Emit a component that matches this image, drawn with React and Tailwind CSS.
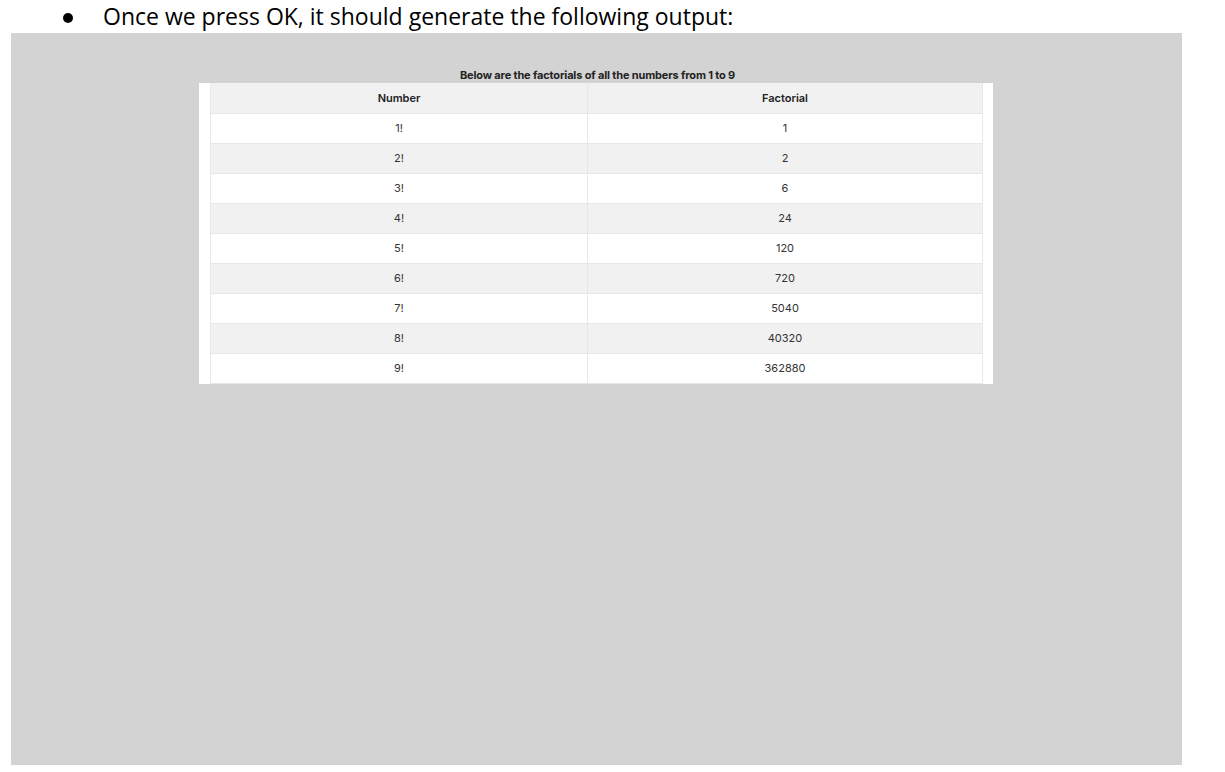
export default function App() {
  const rows = [
    ["1!", "1"],
    ["2!", "2"],
    ["3!", "6"],
    ["4!", "24"],
    ["5!", "120"],
    ["6!", "720"],
    ["7!", "5040"],
    ["8!", "40320"],
    ["9!", "362880"],
  ];
  return (
    <div className="w-[1225px] h-[772px] bg-white relative overflow-hidden">
      <div className="h-[33px] flex items-center">
        <span className="ml-[63px] w-[10px] h-[10px] rounded-full bg-black mt-[3px]"></span>
        <span
          className="ml-[30px] text-[23px] leading-none text-black mt-[-1px]"
          style={{ fontFamily: '"Open Sans", sans-serif' }}
        >
          Once we press OK, it should generate the following output:
        </span>
      </div>
      <div className="ml-[11px] w-[1171px] h-[732px] bg-[#d3d3d3] flex flex-col">
        <div
          className="h-[50px] pt-[36px] text-center text-[11px] leading-[13px] font-bold text-[#222]"
          style={{ fontFamily: 'Inter, "Liberation Sans", sans-serif', letterSpacing: "-0.15px" }}
        >
          <span className="ml-[2px]">Below are the factorials of all the numbers from 1 to 9</span>
        </div>
        <div className="ml-[188px] w-[794px] bg-white pl-[11px] pr-[10px] flex">
          <table
            className="w-[773px] border-collapse text-[11px] text-[#333] border-x border-[#e8e8ee]"
            style={{ fontFamily: 'Inter, "Liberation Sans", sans-serif' }}
          >
            <thead>
              <tr className="bg-[#f1f1f1] h-[30px]">
                <th className="w-[377px] font-semibold text-[#222] border-r border-b border-[#e6e6ec]">Number</th>
                <th className="font-semibold text-[#222] border-b border-[#e6e6ec]">Factorial</th>
              </tr>
            </thead>
            <tbody>
              {rows.map((r, i) => (
                <tr key={i} className={(i % 2 === 1 ? "bg-[#f1f1f1]" : "bg-white") + " h-[30px]"}>
                  <td className="text-center border-r border-b border-[#e6e6ec]">{r[0]}</td>
                  <td className="text-center border-b border-[#e6e6ec]">{r[1]}</td>
                </tr>
              ))}
            </tbody>
          </table>
        </div>
      </div>
    </div>
  );
}
